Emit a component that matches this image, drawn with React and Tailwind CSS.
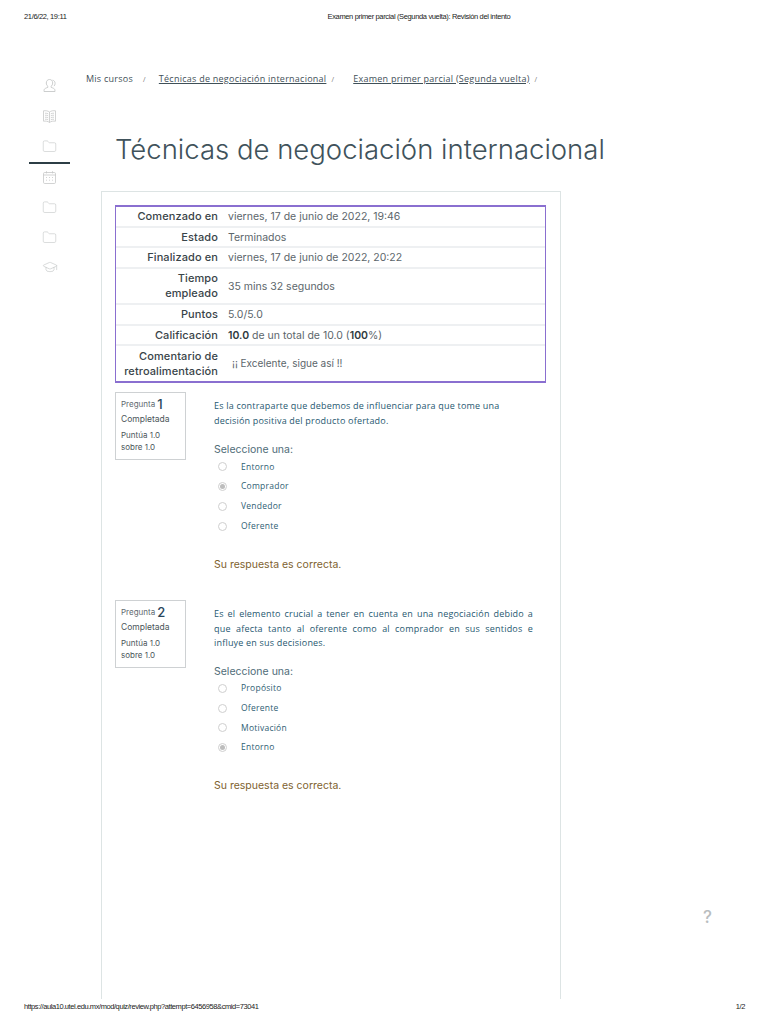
import React from 'react';
import { Folder, GraduationCap } from 'lucide-react';

const poppins = { fontFamily: 'Inter, sans-serif' };
const muli = { fontFamily: '"Open Sans", sans-serif' };
const printFont = { fontFamily: '"Liberation Sans", sans-serif' };

const summary = [
  { label: ['Comenzado en'], value: 'viernes, 17 de junio de 2022, 19:46', h: 'h-[21px]' },
  { label: ['Estado'], value: 'Terminados', h: 'h-[20px]' },
  { label: ['Finalizado en'], value: 'viernes, 17 de junio de 2022, 20:22', h: 'h-[21px]' },
  { label: ['Tiempo', 'empleado'], value: '35 mins 32 segundos', h: 'h-[36px]' },
  { label: ['Puntos'], value: '5.0/5.0', h: 'h-[21px]' },
  { label: ['Calificación'], value: <><b className="font-semibold text-[#2f3a40]">10.0</b> de un total de 10.0 (<b className="font-semibold text-[#2f3a40]">100</b>%)</>, h: 'h-[20px]' },
];

const UserIcon = () => (
  <svg width="16" height="16" viewBox="0 0 16 16" fill="none" stroke="#c6c8c8" strokeWidth="0.9">
    <path d="M7.5 1.5c-2 0-3.2 1.5-3.2 3.5 0 1.4.6 2.6 1.5 3.2v1.2c-1.6.5-3.3 1.2-3.6 2.2-.2.8-.2 1.4-.2 1.9h11c0-.5 0-1.1-.2-1.9-.3-1-2-1.7-3.6-2.2V8.2c.9-.6 1.5-1.8 1.5-3.2 0-2-1.2-3.5-3.2-3.5z" />
    <path d="M10.5 2.2c1.6.2 2.6 1.5 2.6 3.2 0 1.1-.4 2.1-1.1 2.7" />
  </svg>
);

const BookIcon = () => (
  <svg width="15" height="15" viewBox="0 0 15 15" fill="none" stroke="#c6c8c8" strokeWidth="0.8">
    <path d="M7.5 3C6 1.8 3.5 1.5 1.5 1.8v10.4c2-.3 4.5 0 6 1.3 1.5-1.3 4-1.6 6-1.3V1.8c-2-.3-4.5 0-6 1.2z" />
    <path d="M7.5 3v10.5" />
    <path d="M3 4.2c1 0 2.2.1 3.2.6M3 6.2c1 0 2.2.1 3.2.6M3 8.2c1 0 2.2.1 3.2.6M3 10.2c1 0 2.2.1 3.2.6" />
    <path d="M12 4.2c-1 0-2.2.1-3.2.6M12 6.2c-1 0-2.2.1-3.2.6M12 8.2c-1 0-2.2.1-3.2.6M12 10.2c-1 0-2.2.1-3.2.6" />
  </svg>
);

const CalendarIcon = () => (
  <svg width="15" height="15" viewBox="0 0 15 15" fill="none" stroke="#c6c8c8" strokeWidth="0.8">
    <rect x="1.5" y="2.5" width="12" height="11" rx="1.2" />
    <path d="M1.5 5h12M4.5 1.2v2.2M10.5 1.2v2.2" />
    <path d="M4 7.5h1M7 7.5h1M10 7.5h1M4 10.2h1M7 10.2h1M10 10.2h1" />
  </svg>
);

const FolderIcon = () => <Folder size={15} strokeWidth={1} color="#c6c8c8" />;

const Radio = ({ checked }) => (
  <span className="flex h-[9px] w-[9px] items-center justify-center rounded-full border border-[#cfcfcf]">
    {checked && <span className="h-[5px] w-[5px] rounded-full bg-[#bdbdbd]" />}
  </span>
);

const QuestionBox = ({ number }) => (
  <div className="h-[68px] w-[71px] shrink-0 border border-[#ced1d3] px-[5px] pt-[2px] text-[8.5px] text-[#4b5559]" style={poppins}>
    <div className="flex h-[18px] items-center gap-[2px]">
      <span className="text-[8px] text-[#5f6a70]">Pregunta</span>
      <span className="text-[13px] font-medium leading-none text-[#29465b]">{number}</span>
    </div>
    <div className="leading-[12px]">Completada</div>
    <div className="mt-[5px] text-[8px] leading-[11.5px]">Puntúa 1.0<br />sobre 1.0</div>
  </div>
);

const Question = ({ number, lines, options, justify, selectGap, gap, className }) => (
  <div className={`flex ${className}`}>
    <QuestionBox number={number} />
    <div className="ml-[28px] w-[319px] pt-[7px]">
      <div className={`text-[9px] font-medium leading-[14.5px] tracking-[0.2px] text-[#1f5870] ${justify}`} style={muli}>
        {lines}
      </div>
      <div className={`${selectGap} text-[10.5px] leading-[16px] text-[#4f6c78]`} style={poppins}>Seleccione una:</div>
      <div className="-mt-[1px]">
        {options.map((o) => (
          <div key={o.text} className="flex h-[19.8px] items-center">
            <span className="ml-[4px] w-[23px]"><Radio checked={o.checked} /></span>
            <span className="text-[8.5px] font-medium tracking-[0.25px] text-[#2f6074]" style={muli}>{o.text}</span>
          </div>
        ))}
      </div>
      <div className={`${gap} text-[10.5px] leading-[16px] text-[#80622f]`} style={poppins}>Su respuesta es correcta.</div>
    </div>
  </div>
);

export default function App() {
  return (
    <div className="relative flex h-[1024px] w-[768px] flex-col overflow-hidden bg-white">
      {/* print header */}
      <div className="flex h-[34px] px-[24px] pt-[11px] text-[7.5px] leading-[12px] tracking-[-0.35px] text-[#222]" style={printFont}>
        <span>21/6/22, 19:11</span>
        <span className="ml-[261px]">Examen primer parcial (Segunda vuelta): Revisión del intento</span>
      </div>

      <div className="flex min-h-0 flex-1">
        {/* sidebar */}
        <div className="w-[86px] shrink-0 pl-[29px] pt-[37px]">
          <div className="w-[41px]">
            <div className="flex h-[30px] items-center justify-center"><UserIcon /></div>
            <div className="flex h-[30px] items-center justify-center"><BookIcon /></div>
            <div className="flex h-[30px] items-center justify-center"><FolderIcon /></div>
            <div className="mt-[1px] h-[2px] bg-[#2c3e45]" />
            <div className="mb-[3px] mt-[1px] flex h-[24px] items-center justify-center"><CalendarIcon /></div>
            <div className="flex h-[30px] items-center justify-center"><FolderIcon /></div>
            <div className="flex h-[30px] items-center justify-center"><FolderIcon /></div>
            <div className="flex h-[30px] items-center justify-center"><GraduationCap size={16} strokeWidth={1} color="#c6c8c8" /></div>
          </div>
        </div>

        <div className="flex min-w-0 flex-1 flex-col">
          {/* breadcrumb */}
          <div className="flex h-[52px] items-end pb-[1px] text-[9px] tracking-[0.25px] text-[#3f5058]" style={muli}>
            <span>Mis cursos</span>
            <span className="ml-[10px] text-[7px] text-[#777]">/</span>
            <span className="ml-[13px] underline">Técnicas de negociación internacional</span>
            <span className="ml-[5px] text-[7px] text-[#777]">/</span>
            <span className="ml-[19px] underline">Examen primer parcial (Segunda vuelta)</span>
            <span className="ml-[5px] text-[7px] text-[#777]">/</span>
          </div>

          <h1 className="ml-[29px] mt-[45px] text-[27.5px] font-light leading-[36px] text-[#40525b]" style={poppins}>
            Técnicas de negociación internacional
          </h1>

          {/* main card */}
          <div className="ml-[15px] mt-[24px] w-[460px] flex-1 border-x border-t border-[#dde4e4] px-[13px] pt-[13px]">
            <div className="w-[431px] border-x border-y-2 border-[#8a6fd0] text-[10.5px] leading-[15px]" style={poppins}>
              {summary.map((row) => (
                <div key={row.label[0]} className={`flex ${row.h} items-center border-b-2 border-[#eef0f2]`}>
                  <div className="w-[102px] shrink-0 text-right text-[11px] font-medium tracking-[0.1px] text-[#394449]">
                    {row.label.map((l) => <div key={l}>{l}</div>)}
                  </div>
                  <div className="pl-[10px] text-[#5c666b]">{row.value}</div>
                </div>
              ))}
              <div className="flex h-[35px] items-center">
                <div className="w-[102px] shrink-0 text-right text-[11px] font-medium tracking-[0.1px] text-[#394449]">
                  <div>Comentario de</div>
                  <div className="whitespace-nowrap">retroalimentación</div>
                </div>
                <div className="pl-[14px] text-[10px] text-[#5c666b]">¡¡ Excelente, sigue así !!</div>
              </div>
            </div>

            <Question
              className="mt-[9px] h-[208px]"
              number="1"
              selectGap="mt-[14px]"
              gap="mt-[21px]"
              lines={<>Es la contraparte que debemos de influenciar para que tome una<br />decisión positiva del producto ofertado.</>}
              options={[{ text: 'Entorno' }, { text: 'Comprador', checked: true }, { text: 'Vendedor' }, { text: 'Oferente' }]}
            />
            <Question
              number="2"
              selectGap="mt-[13px]"
              gap="mt-[20px]"
              justify="text-justify"
              lines="Es el elemento crucial a tener en cuenta en una negociación debido a que afecta tanto al oferente como al comprador en sus sentidos e influye en sus decisiones."
              options={[{ text: 'Propósito' }, { text: 'Oferente' }, { text: 'Motivación' }, { text: 'Entorno', checked: true }]}
            />
          </div>
        </div>
      </div>

      {/* print footer */}
      <div className="flex h-[25px] justify-between pl-[24px] pr-[23px] pt-[2px] text-[7.5px] leading-[12px] tracking-[-0.42px] text-[#222]" style={printFont}>
        <span>https://aula10.utel.edu.mx/mod/quiz/review.php?attempt=6456958&amp;cmid=73041</span>
        <span>1/2</span>
      </div>

      {/* floating help */}
      <span className="absolute left-[703px] top-[906px] text-[17px] font-medium leading-[22px] text-[#b9bdbf]" style={poppins}>?</span>
    </div>
  );
}
